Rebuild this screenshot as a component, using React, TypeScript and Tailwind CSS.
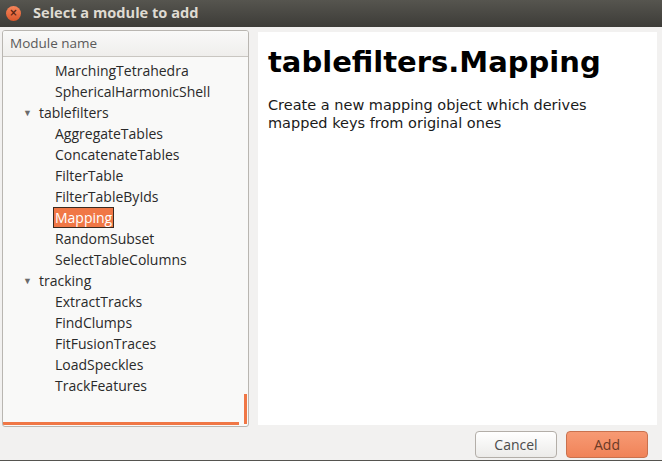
const ubuntu = { fontFamily: '"Open Sans", "Liberation Sans", sans-serif' };
const dejavu = { fontFamily: '"DejaVu Sans", sans-serif' };

type Row = { label: string; level: number; selected?: boolean };

const rows: Row[] = [
  { label: 'MarchingTetrahedra', level: 1 },
  { label: 'SphericalHarmonicShell', level: 1 },
  { label: 'tablefilters', level: 0 },
  { label: 'AggregateTables', level: 1 },
  { label: 'ConcatenateTables', level: 1 },
  { label: 'FilterTable', level: 1 },
  { label: 'FilterTableByIds', level: 1 },
  { label: 'Mapping', level: 1, selected: true },
  { label: 'RandomSubset', level: 1 },
  { label: 'SelectTableColumns', level: 1 },
  { label: 'tracking', level: 0 },
  { label: 'ExtractTracks', level: 1 },
  { label: 'FindClumps', level: 1 },
  { label: 'FitFusionTraces', level: 1 },
  { label: 'LoadSpeckles', level: 1 },
  { label: 'TrackFeatures', level: 1 },
];

function TreeRow({ row }: { row: Row }) {
  if (row.level === 0) {
    return (
      <div className="h-[21px] flex items-center pl-[20px]">
        <span className="w-[16px] text-[9px] text-[#6b6b6b] leading-none">▼</span>
        <span className="text-[#2a2a2a]">{row.label}</span>
      </div>
    );
  }
  return (
    <div className="h-[21px] flex items-center pl-[50px]">
      {row.selected ? (
        <span className="h-[21px] flex items-center px-[1px] bg-[#f07746] border border-[#3a2a20] text-white">
          {row.label}
        </span>
      ) : (
        <span className="px-[2px] text-[#2a2a2a]">{row.label}</span>
      )}
    </div>
  );
}

export default function App() {
  return (
    <div className="w-[662px] h-[461px] bg-[#f2f1f0] flex flex-col overflow-hidden">
      {/* title bar */}
      <div className="h-[27px] bg-gradient-to-b from-[#56554f] to-[#3d3c38] flex items-center pl-[6px] gap-[12px]">
        <div className="w-[15px] h-[15px] rounded-full bg-gradient-to-b from-[#f6855a] to-[#d9572b] flex items-center justify-center">
          <span className="text-[10px] leading-none text-[#5a2412] font-bold" style={dejavu}>×</span>
        </div>
        <span className="text-[14.6px] font-bold text-[#dfdbd2]" style={ubuntu}>Select a module to add</span>
      </div>

      <div className="flex-1 flex">
        {/* module tree */}
        <div className="ml-[2px] mt-[3px] w-[247px] h-[397px] bg-[#f9f9f8] border border-[#b9b6b1] rounded-[3px] flex flex-col relative overflow-hidden" style={ubuntu}>
          <div className="h-[26px] border-b border-[#c9c6c1] bg-gradient-to-b from-[#f9f9f8] to-[#efeeec] flex items-center pl-[7px] text-[13.5px] text-[#5a5a5a]">
            Module name
          </div>
          <div className="pt-[3px] text-[14px]">
            {rows.map((r) => (
              <TreeRow key={r.label} row={r} />
            ))}
          </div>
          <div className="absolute right-[1px] bottom-[2px] w-[3px] h-[30px] bg-[#f07746]" />
          <div className="absolute left-0 bottom-[1px] w-[236px] h-[3px] bg-[#f07746]" />
        </div>

        {/* description */}
        <div className="ml-[9px] mt-[5px] w-[399px] h-[393px] bg-white pl-[10px] pt-[12px]" style={dejavu}>
          <div className="text-[29px] font-bold text-black leading-[36px]">tablefilters.Mapping</div>
          <div className="mt-[16px] text-[14.5px] leading-[18px] text-[#1a1a1a]">
            Create a new mapping object which derives
            <br />
            mapped keys from original ones
          </div>
        </div>
      </div>

      {/* buttons */}
      <div className="h-[34px] flex items-start justify-end gap-[9px] pr-[14px] pt-[4px]" style={ubuntu}>
        <button className="w-[82px] h-[27px] rounded-[4px] border border-[#b3aea8] bg-gradient-to-b from-[#ffffff] to-[#ecebe9] text-[14px] text-[#4c4c4c]">
          Cancel
        </button>
        <button className="w-[82px] h-[27px] rounded-[4px] border border-[#c9714e] bg-gradient-to-b from-[#f79a74] to-[#f08358] text-[14px] text-[#6b3a26]">
          Add
        </button>
      </div>
      <div className="h-[1px] bg-[#55544f]" />
    </div>
  );
}
